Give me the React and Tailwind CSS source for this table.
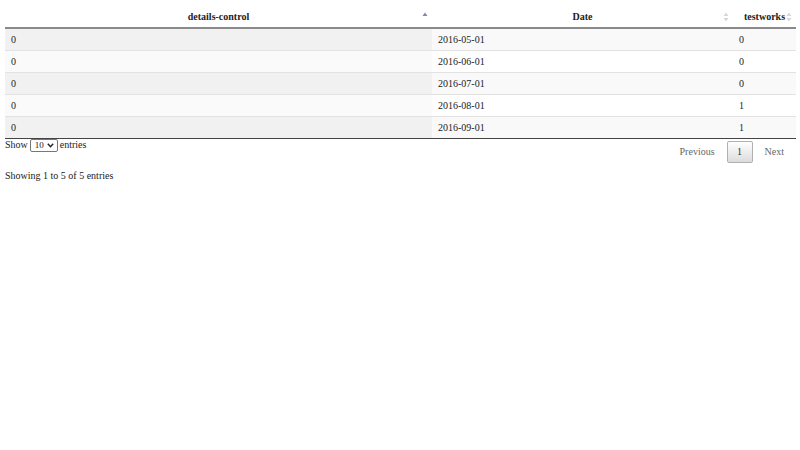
const rows = [
  ['0', '2016-05-01', '0'],
  ['0', '2016-06-01', '0'],
  ['0', '2016-07-01', '0'],
  ['0', '2016-08-01', '1'],
  ['0', '2016-09-01', '1'],
];

function SortIcon({ active }) {
  return (
    <svg width="6" height="12" viewBox="0 0 6 12" className="absolute right-[4px] top-[6px]">
      <path d="M3 1.5 L5.5 5 L0.5 5 Z" fill={active ? '#7d89b3' : '#d8d8d8'} />
      {!active && <path d="M3 10.5 L5.5 7 L0.5 7 Z" fill="#d8d8d8" />}
    </svg>
  );
}

export default function App() {
  return (
    <div className="w-[800px] h-[450px] bg-white px-[5px] pt-[5px] text-[10px] text-[#222]" style={{ fontFamily: '"Liberation Serif", "Times New Roman", serif' }}>
      <table className="w-[791px] table-fixed border-collapse border-b border-[#444]">
        <colgroup>
          <col className="w-[427px]" />
          <col className="w-[301px]" />
          <col className="w-[63px]" />
        </colgroup>
        <thead>
          <tr className="border-b-2 border-[#8a8a8a]">
            <th className="relative h-[23px] px-[10px] font-bold text-center">
              details-control
              <SortIcon active />
            </th>
            <th className="relative h-[23px] px-[10px] font-bold text-center">
              Date
              <SortIcon />
            </th>
            <th className="relative h-[23px] px-0 font-bold text-center">
              testworks
              <SortIcon />
            </th>
          </tr>
        </thead>
        <tbody>
          {rows.map((r, i) => {
            const odd = i % 2 === 0;
            return (
              <tr key={i} className={i > 0 ? 'border-t border-[#e2e2e2]' : ''}>
                <td className={`h-[22px] px-[6px] ${odd ? 'bg-[#f1f1f1]' : 'bg-[#fafafa]'}`}>{r[0]}</td>
                <td className={`h-[22px] px-[6px] ${odd ? 'bg-[#f9f9f9]' : 'bg-white'}`}>{r[1]}</td>
                <td className={`h-[22px] px-[6px] ${odd ? 'bg-[#f9f9f9]' : 'bg-white'}`}>{r[2]}</td>
              </tr>
            );
          })}
        </tbody>
      </table>

      <div className="flex justify-between items-start w-[791px]">
        <div className="flex items-center gap-[2px] leading-[12px]">
          <span>Show</span>
          <div className="relative">
            <select className="appearance-none block h-[13px] w-[28px] border border-[#777] rounded-[2px] text-[9px] leading-[11px] pl-[4px] bg-white" defaultValue="10">
              <option>10</option>
              <option>25</option>
              <option>50</option>
              <option>100</option>
            </select>
            <svg width="7" height="5" viewBox="0 0 7 5" className="absolute right-[4px] top-[4px] pointer-events-none">
              <path d="M0.8 0.8 L3.5 3.8 L6.2 0.8" fill="none" stroke="#222" strokeWidth="1.4" />
            </svg>
          </div>
          <span>entries</span>
        </div>
        <div className="flex items-center mt-[2px] text-[#666]">
          <span className="px-[12px] leading-[22px]">Previous</span>
          <span className="w-[26px] h-[22px] flex items-center justify-center border border-[#b0b0b0] rounded-[2px] bg-gradient-to-b from-white to-[#dcdcdc] text-[#333]">1</span>
          <span className="px-[12px] leading-[22px]">Next</span>
        </div>
      </div>
      <div className="mt-[7px] leading-[12px]">Showing 1 to 5 of 5 entries</div>
    </div>
  );
}
